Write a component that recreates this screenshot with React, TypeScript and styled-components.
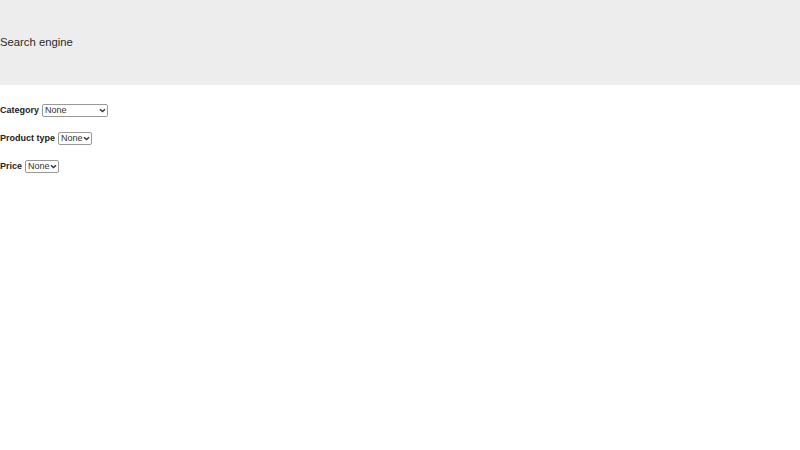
import { FC } from "react";
import styled, { createGlobalStyle } from "styled-components";
//
interface FilterProps {
  label: string;
  width?: number;
}
//
const Chevron: FC = () => (
  <ChevronIcon width="7" height="5" viewBox="0 0 7 5">
    <polyline points="1,1.2 3.5,3.6 6,1.2" fill="none" stroke="#333" strokeWidth="1.4" />
  </ChevronIcon>
);
//
const Filter: FC<FilterProps> = ({ label, width }) => {
  return (
    <Row>
      <Label>{label}</Label>
      <SelectWrapper>
        <Select $width={width} defaultValue="none">
          <option value="none">None</option>
        </Select>
        <Chevron />
      </SelectWrapper>
    </Row>
  );
};
//
const App: FC = () => {
  return (
    <>
      <GlobalStyle />
      <Header>
        <Title>Search engine</Title>
      </Header>
      <Filters>
        <Filter label="Category" width={66} />
        <Filter label="Product type" width={34} />
        <Filter label="Price" width={34} />
      </Filters>
    </>
  );
};

export default App;

const GlobalStyle = createGlobalStyle`
  body {
    margin: 0;
    background: #fff;
    color: #222;
    font-family: "Liberation Sans", Arial, sans-serif;
  }
`;

const Header = styled.header`
  display: flex;
  align-items: center;
  height: 85px;
  background-color: #ededed;
`;

const Title = styled.h1`
  margin: 0;
  padding-bottom: 1px;
  font-size: 11.3px;
  font-weight: normal;
  color: #2a2a2a;
`;

const Filters = styled.form`
  display: flex;
  flex-direction: column;
  align-items: flex-start;
  gap: 14px;
  padding-top: 18px;
`;

const Row = styled.div`
  display: flex;
  align-items: center;
  gap: 3px;
  height: 14px;
`;

const Label = styled.label`
  font-size: 9px;
  font-weight: bold;
  color: #222;
`;

const SelectWrapper = styled.div`
  position: relative;
  display: flex;
`;

const ChevronIcon = styled.svg`
  position: absolute;
  right: 2px;
  top: 4.5px;
  pointer-events: none;
`;

const Select = styled.select<{ $width?: number }>`
  appearance: none;
  font-family: "Liberation Sans", Arial, sans-serif;
  font-size: 9px;
  height: 13px;
  padding: 0 0 0 2px;
  width: ${(p) => (p.$width ? `${p.$width}px` : "auto")};
  border: 1px solid #999;
  border-radius: 2px;
  background: #fff;
  color: #333;
  outline: none;
`;
